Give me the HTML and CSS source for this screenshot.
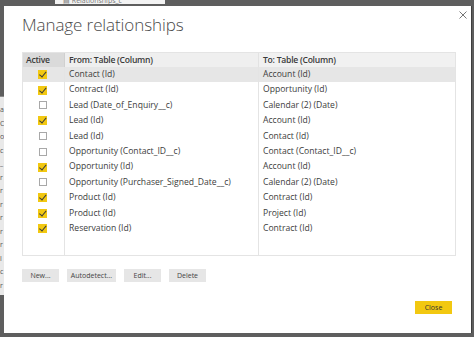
FILE: index.html
```html
<!DOCTYPE html>
<html>
<head>
<meta charset="utf-8">
<link rel="stylesheet" href="styles.css">
</head>
<body>
<div class="app-strip">
  <div class="strip-dark"></div>
  <div class="strip-list">
    <div>a</div><div>C</div><div>o</div><div>c</div><div>_</div><div>r</div><div>r</div><div>r</div><div>r</div><div>r</div><div>r</div><div>l</div><div>c</div><div>r</div>
  </div>
</div>
<div class="main">
  <div class="app-top"><div class="app-tab">▤ Relationships_c</div></div>
  <div class="dialog">
    <div class="dlg-head">
      <h1 class="title">Manage relationships</h1>
      <svg class="close-x" width="8" height="8" viewBox="0 0 8 8"><path d="M0.5 0.5L7.5 7.5M7.5 0.5L0.5 7.5" stroke="#666" stroke-width="0.9" fill="none"/></svg>
    </div>
    <div class="grid">
      <div class="hd hd-active">Active</div>
      <div class="hd">From: Table (Column)</div>
      <div class="hd hd-last">To: Table (Column)</div>

      <div class="c c1 sel"><span class="cb on"></span></div><div class="c sel">Contact (Id)</div><div class="c c3 sel">Account (Id)</div>
      <div class="c c1"><span class="cb on"></span></div><div class="c">Contract (Id)</div><div class="c c3">Opportunity (Id)</div>
      <div class="c c1"><span class="cb"></span></div><div class="c">Lead (Date_of_Enquiry__c)</div><div class="c c3">Calendar (2) (Date)</div>
      <div class="c c1"><span class="cb on"></span></div><div class="c">Lead (Id)</div><div class="c c3">Account (Id)</div>
      <div class="c c1"><span class="cb"></span></div><div class="c">Lead (Id)</div><div class="c c3">Contact (Id)</div>
      <div class="c c1"><span class="cb"></span></div><div class="c">Opportunity (Contact_ID__c)</div><div class="c c3">Contact (Contact_ID__c)</div>
      <div class="c c1"><span class="cb on"></span></div><div class="c">Opportunity (Id)</div><div class="c c3">Account (Id)</div>
      <div class="c c1"><span class="cb"></span></div><div class="c">Opportunity (Purchaser_Signed_Date__c)</div><div class="c c3">Calendar (2) (Date)</div>
      <div class="c c1"><span class="cb on"></span></div><div class="c">Product (Id)</div><div class="c c3">Contract (Id)</div>
      <div class="c c1"><span class="cb on"></span></div><div class="c">Product (Id)</div><div class="c c3">Project (Id)</div>
      <div class="c c1"><span class="cb on"></span></div><div class="c">Reservation (Id)</div><div class="c c3">Contract (Id)</div>

      <div class="c c1 fill"></div><div class="c fill"></div><div class="c c3 fill"></div>
    </div>
    <div class="actions">
      <button class="btn w37">New...</button>
      <button class="btn w49">Autodetect...</button>
      <button class="btn w37">Edit...</button>
      <button class="btn w37">Delete</button>
    </div>
    <div class="footer">
      <button class="btn primary">Close</button>
    </div>
  </div>
</div>
</body>
</html>
```
FILE: styles.css
```css
html, body {
  margin: 0;
  padding: 0;
}
body {
  width: 474px;
  height: 337px;
  overflow: hidden;
  background: #5e5e5e;
  display: flex;
  font-family: "Open Sans", "Noto Sans", sans-serif;
}
.app-strip {
  width: 4px;
  flex: none;
  display: flex;
  flex-direction: column;
  overflow: hidden;
}
.strip-dark {
  height: 96px;
  border-bottom: 1px solid #8a8a8a;
}
.strip-list {
  background: #e9e9e9;
  height: 192px;
  font-size: 7px;
  line-height: 13.5px;
  color: #555;
  white-space: nowrap;
  padding-top: 6px;
}
.main {
  flex: none;
  width: 468px;
  display: flex;
  flex-direction: column;
}
.app-top {
  height: 6px;
  display: flex;
  overflow: hidden;
}
.app-tab {
  margin-left: 51px;
  width: 110px;
  height: 4px;
  background: #f3f3f3;
  font-size: 7px;
  line-height: 2px;
  color: #777;
  padding-left: 8px;
  overflow: hidden;
  box-sizing: border-box;
}
.dialog {
  background: #fff;
  height: 327px;
  border-right: 1px solid #3f3f3f;
  box-sizing: border-box;
  padding: 0 15px 0 18px;
  display: flex;
  flex-direction: column;
}
.dlg-head {
  display: flex;
  justify-content: space-between;
  align-items: flex-start;
  height: 46px;
}
.title {
  margin: 8px 0 0 0;
  font-size: 17px;
  font-weight: 300;
  color: #4a4a4a;
  line-height: 22px;
  letter-spacing: -0.1px;
}
.close-x {
  margin-top: 5px;
  margin-right: -11px;
}
.grid {
  display: grid;
  grid-template-columns: 42px 194px 1fr;
  grid-template-rows: 14px repeat(11, 15.4px) 1fr;
  height: 204px;
  width: 434px;
  border: 1px solid #e4e4e4;
  box-sizing: border-box;
  font-size: 8.6px;
  color: #3c3c3c;
}
.hd {
  background: #efefef;
  font-weight: 600;
  letter-spacing: -0.25px;
  line-height: 14px;
  padding-left: 4px;
  color: #3a3a3a;
  border-right: 1px solid #e2e2e2;
  white-space: nowrap;
}
.hd-active {
  background: #dadada;
  padding-left: 3px;
  border-right: 1px solid #d0d0d0;
}
.hd-last {
  border-right: none;
  background: #f1f1f1;
}
.c {
  line-height: 15.4px;
  padding-left: 4px;
  border-right: 1px solid #e4e4e4;
  white-space: nowrap;
}
.c3 {
  border-right: none;
}
.c1 {
  display: flex;
  align-items: center;
  justify-content: center;
  padding-left: 0;
}
.sel {
  background: #e6e6e6;
}
.cb {
  width: 8px;
  height: 8px;
  box-sizing: border-box;
  border: 1px solid #a8a8a8;
  background: #fff;
  position: relative;
  margin-right: 2px;
}
.cb.on {
  width: 9px;
  height: 9px;
  border: none;
  background: #f2c811;
}
.cb.on::after {
  content: "";
  position: absolute;
  left: 3px;
  top: 0px;
  width: 2.5px;
  height: 5.5px;
  border-right: 1.4px solid #3a3a3a;
  border-bottom: 1.4px solid #3a3a3a;
  transform: rotate(40deg);
}
.actions {
  display: flex;
  gap: 8px;
  margin-top: 13px;
}
.btn {
  height: 13px;
  border: none;
  background: #e6e6e6;
  font-family: "Open Sans", "Noto Sans", sans-serif;
  font-size: 7px;
  color: #444;
  padding: 0;
  line-height: 13px;
}
.w37 { width: 37px; }
.w49 { width: 49px; }
.footer {
  display: flex;
  justify-content: flex-end;
  margin-top: 19px;
  padding-right: 4px;
}
.primary {
  width: 37px;
  background: #f2c811;
  color: #333;
}
```
